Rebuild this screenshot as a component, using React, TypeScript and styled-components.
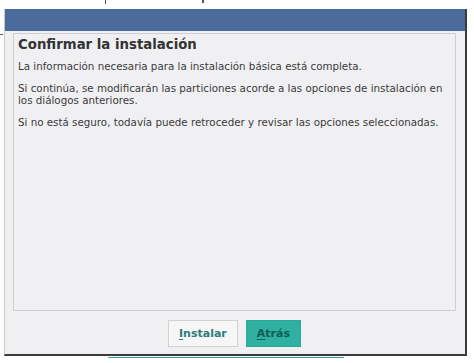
import React from "react";
import styled, { createGlobalStyle } from "styled-components";

const GlobalStyle = createGlobalStyle`
  html, body {
    margin: 0;
    padding: 0;
    background: #ffffff;
  }
  body {
    font-family: "DejaVu Sans", "Noto Sans", sans-serif;
  }
`;

const Screen = styled.div`
  position: relative;
  width: 474px;
  height: 363px;
  overflow: hidden;
  background: #ffffff;
  padding: 9px 0 0 4px;
  box-sizing: border-box;
`;

// bits of the window lying under the dialog
const Fragment = styled.div<{ $x: number; $y: number; $w: number; $h: number; $c?: string }>`
  position: absolute;
  left: ${(p) => p.$x}px;
  top: ${(p) => p.$y}px;
  width: ${(p) => p.$w}px;
  height: ${(p) => p.$h}px;
  background: ${(p) => p.$c || "#555"};
`;

const Dialog = styled.div`
  position: relative;
  width: 463px;
  height: 347px;
  box-sizing: border-box;
  display: flex;
  flex-direction: column;
  background: #f0f0f2;
  border-left: 1px solid #c9c9c9;
  border-right: 2px solid #3a3a3a;
  border-bottom: 2px solid #3a3a3a;
`;

const TitleBar = styled.div`
  height: 22px;
  flex: none;
  background: #4a6b9c;
`;

const Body = styled.div`
  flex: 1;
  display: flex;
  flex-direction: column;
  padding: 2px 9px 0 8px;
`;

const Panel = styled.div`
  height: 278px;
  box-sizing: border-box;
  border: 1px solid #cfcfd1;
  padding: 2px 4px 0 4px;
  color: #333333;
`;

const Heading = styled.h1`
  margin: 0 0 7px 0;
  font-size: 13.3px;
  font-weight: bold;
  line-height: 17px;
  color: #333333;
`;

const Paragraph = styled.p`
  margin: 0 0 10px 0;
  font-size: 10.3px;
  line-height: 12px;
  color: #3a3a3a;
`;

const Footer = styled.div`
  display: flex;
  justify-content: center;
  gap: 8px;
  padding: 9px 0 0 0;
`;

const Button = styled.button<{ $primary?: boolean }>`
  height: 27px;
  padding: 0 10px;
  box-sizing: border-box;
  font-family: "DejaVu Sans", "Noto Sans", sans-serif;
  font-size: 11px;
  font-weight: bold;
  border: 1px solid ${(p) => (p.$primary ? "#2aa898" : "#d2d2d2")};
  background: ${(p) => (p.$primary ? "#2fb0a0" : "#f6f6f6")};
  color: ${(p) => (p.$primary ? "#0f5c56" : "#2b7d77")};
  cursor: pointer;

  u {
    text-decoration-thickness: 1px;
    text-underline-offset: 2px;
  }
`;

export default function App() {
  return (
    <>
      <GlobalStyle />
      <Screen>
        <Fragment $x={105} $y={0} $w={1} $h={4} />
        <Fragment $x={202} $y={0} $w={2} $h={3} />
        <Fragment $x={0} $y={34} $w={3} $h={1} />
        <Fragment $x={108} $y={357} $w={236} $h={1} $c="#3aa597" />
        <Dialog>
          <TitleBar />
          <Body>
            <Panel>
              <Heading>Confirmar la instalación</Heading>
              <Paragraph>La información necesaria para la instalación básica está completa.</Paragraph>
              <Paragraph>
                Si continúa, se modificarán las particiones acorde a las opciones de instalación en los
                diálogos anteriores.
              </Paragraph>
              <Paragraph>Si no está seguro, todavía puede retroceder y revisar las opciones seleccionadas.</Paragraph>
            </Panel>
            <Footer>
              <Button>
                <u>I</u>nstalar
              </Button>
              <Button $primary>
                <u>A</u>trás
              </Button>
            </Footer>
          </Body>
        </Dialog>
      </Screen>
    </>
  );
}
